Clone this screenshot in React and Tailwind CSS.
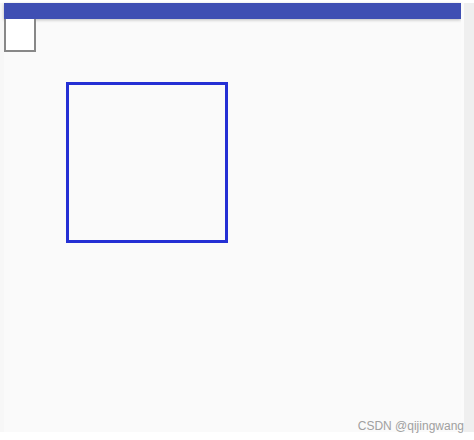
export default function App() {
  return (
    <div className="w-[474px] h-[440px] bg-white flex flex-col overflow-hidden" style={{ fontFamily: '"Liberation Sans", Arial, sans-serif' }}>
      <div className="flex h-[432px] pt-[3px]">
        <div className="w-[4px] bg-[#f7f7f7]" />
        <div className="w-[457px] bg-[#fafafa] flex flex-col">
          <div className="h-[16px] bg-[#3f4fb3] shadow-[0_1px_3px_rgba(0,0,0,0.25)]" />
          <div className="flex-1 flex flex-col">
            <div className="w-[32px] h-[33px] bg-white border-[2.5px] border-[#888888] border-t-0" />
            <div className="ml-[62px] mt-[30px] w-[162px] h-[161px] border-[3px] border-[#2430d4]" />
            <div className="relative z-10 mt-auto self-end mr-[-3px] text-[12px] leading-[12px] text-[#a0a0a0]">
              CSDN @qijingwang
            </div>
          </div>
        </div>
        <div className="w-[3px] bg-[#fbfbfb]" />
        <div className="w-[10px] bg-[#efefef]" />
      </div>
      <div className="flex-1 bg-white" />
    </div>
  );
}
